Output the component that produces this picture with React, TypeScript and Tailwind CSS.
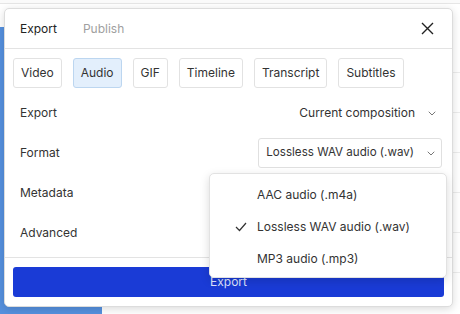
import React from "react";

const Chevron = ({ className = "" }: { className?: string }) => (
  <svg width="8" height="5" viewBox="0 0 8 5" className={className} fill="none">
    <path d="M1 1l3 3 3-3" stroke="#777" strokeWidth="1" strokeLinecap="round" strokeLinejoin="round" />
  </svg>
);

export default function App() {
  const tabs = ["Video", "Audio", "GIF", "Timeline", "Transcript", "Subtitles"];
  const rows = ["Export", "Format", "Metadata", "Advanced"];
  return (
    <div
      className="relative w-[460px] h-[314px] overflow-hidden bg-white text-[12px] text-[#2b2b2b]"
      style={{ fontFamily: "Inter, 'Noto Sans', sans-serif" }}
    >
      {/* background app */}
      <div className="flex flex-col h-full">
        <div className="h-[4px] border-b border-[#e6e6e6] bg-[#fafafa]" />
        <div className="flex flex-1 pt-[23px]">
          <div className="w-[102px] bg-[#5590de]" />
          <div className="flex-1 flex flex-col bg-white">
            <div className="h-[46px] border-b border-[#ececec]" />
            <div className="h-[40px] border-b border-[#ececec]" />
            <div className="h-[40px] border-b border-[#ececec]" />
            <div className="h-[40px] border-b border-[#ececec]" />
            <div className="h-[40px] border-b border-[#ececec]" />
            <div className="h-[40px] border-b border-[#ececec]" />
          </div>
        </div>
      </div>

      {/* dialog */}
      <div className="absolute left-[4px] top-[8px] w-[449px] h-[299px] bg-white border border-[#dcdcdc] rounded-[5px] shadow-[0_2px_8px_rgba(0,0,0,0.15)] flex flex-col">
        <div className="h-[40px] flex items-center border-b border-[#e3e3e3] pl-[15px] pr-[18px]">
          <span className="text-[#222]">Export</span>
          <span className="ml-[26px] text-[#a0a0a0]">Publish</span>
          <svg className="ml-auto" width="13" height="13" viewBox="0 0 13 13">
            <path d="M1 1l11 11M12 1L1 12" stroke="#222" strokeWidth="1.4" />
          </svg>
        </div>
        <div className="flex gap-[11px] pl-[8px] pt-[9px]">
          {tabs.map((t) => (
            <div
              key={t}
              className={
                "h-[30px] px-[7px] flex items-center rounded-[3px] border " +
                (t === "Audio"
                  ? "bg-[#e3effc] border-[#bcd6f0] text-[#333]"
                  : "bg-white border-[#e2e2e2] text-[#333]")
              }
            >
              {t}
            </div>
          ))}
        </div>
        <div className="flex flex-col pt-[5px]">
          {rows.map((r) => (
            <div key={r} className="h-[40px] flex items-center pl-[15px] pr-[10px]">
              <span className="text-[#333]">{r}</span>
              {r === "Export" && (
                <div className="ml-auto h-[30px] flex items-center pl-[8px] pr-[6px] gap-[13px] text-[#333]">
                  Current composition
                  <Chevron />
                </div>
              )}
              {r === "Format" && (
                <div className="ml-auto h-[30px] flex items-center pl-[7px] pr-[6px] gap-[13px] border border-[#e0e0e0] rounded-[3px] text-[#333] text-[11.6px]">
                  Lossless WAV audio (.wav)
                  <Chevron />
                </div>
              )}
            </div>
          ))}
        </div>
        <div className="mt-[4px] border-t border-[#e3e3e3] px-[8px] pt-[9px]">
          <div className="h-[30px] rounded-[3px] bg-[#1a3bd6] flex items-center justify-center text-[#dfe4ff]">
            Export
          </div>
        </div>
      </div>

      {/* dropdown menu */}
      <div className="absolute left-[209px] top-[173px] w-[238px] h-[105px] bg-white border border-[#e2e2e2] rounded-[5px] shadow-[0_3px_10px_rgba(0,0,0,0.15)] flex flex-col pt-[5px]">
        {["AAC audio (.m4a)", "Lossless WAV audio (.wav)", "MP3 audio (.mp3)"].map((o, i) => (
          <div key={o} className="h-[32px] flex items-center text-[#333]">
            <div className="w-[47px] flex justify-end pr-[10px]">
              {i === 1 && (
                <svg width="12" height="10" viewBox="0 0 12 10">
                  <path d="M1 5l3.5 3.5L11 1" stroke="#333" strokeWidth="1.2" fill="none" />
                </svg>
              )}
            </div>
            <span>{o}</span>
          </div>
        ))}
      </div>
    </div>
  );
}
